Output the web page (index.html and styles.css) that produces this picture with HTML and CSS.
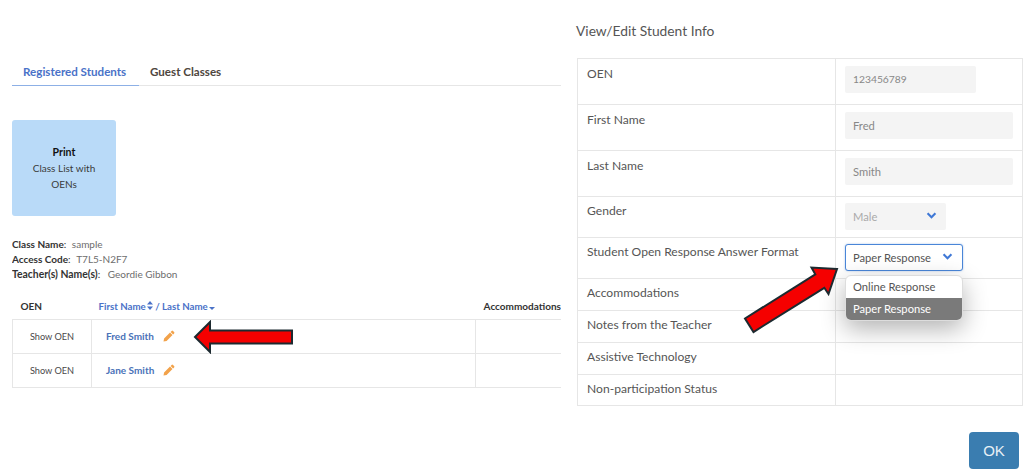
FILE: index.html
```html
<!DOCTYPE html>
<html lang="en">
<head>
<meta charset="utf-8">
<title>View/Edit Student Info</title>
<link rel="stylesheet" href="styles.css">
</head>
<body>
<div class="page">
  <section class="left">
    <nav class="tabs">
      <a class="tab active">Registered Students</a>
      <a class="tab">Guest Classes</a>
    </nav>
    <div class="print-tile"><b>Print</b><span>Class List with</span><span>OENs</span></div>
    <dl class="class-info">
      <div><dt>Class Name</dt>: <dd>sample</dd></div>
      <div><dt>Access Code</dt>: <dd>T7L5-N2F7</dd></div>
      <div><dt>Teacher(s) Name(s)</dt>: <dd>Geordie Gibbon</dd></div>
    </dl>
    <table class="students">
      <thead>
        <tr>
          <th class="c-oen">OEN</th>
          <th class="c-name"><span class="sort">First Name<svg class="updown" viewBox="0 0 6 9" width="6" height="9"><path d="M3 0 6 3.6H0zM3 9 0 5.4H6z"/></svg> / Last Name<svg class="caret" viewBox="0 0 8 4" width="6" height="3"><path d="M0 0H8L4 4z"/></svg></span></th>
          <th class="c-acc">Accommodations</th>
        </tr>
      </thead>
      <tbody>
        <tr>
          <td class="c-oen">Show OEN</td>
          <td class="c-name"><a class="student">Fred Smith</a><svg class="pencil" viewBox="0 0 12 12" width="12" height="12"><path d="M8.6.9a1 1 0 0 1 1.4 0l1.1 1.1a1 1 0 0 1 0 1.4l-1 1L7.6 1.9zM7 2.5 9.500 5 3.600 10.900.5 11.500 1.100 8.400z"/></svg></td>
          <td></td>
        </tr>
        <tr>
          <td class="c-oen">Show OEN</td>
          <td class="c-name"><a class="student">Jane Smith</a><svg class="pencil" viewBox="0 0 12 12" width="12" height="12"><path d="M8.6.9a1 1 0 0 1 1.4 0l1.1 1.1a1 1 0 0 1 0 1.4l-1 1L7.6 1.900zM7 2.500 9.500 5 3.600 10.900.5 11.500 1.100 8.400z"/></svg></td>
          <td></td>
        </tr>
      </tbody>
    </table>
  </section>
  <section class="right">
    <h2 class="title">View/Edit Student Info</h2>
    <table class="info">
      <tr class="r-tall"><th>OEN</th><td><div class="field short">123456789</div></td></tr>
      <tr class="r-tall"><th>First Name</th><td><div class="field">Fred</div></td></tr>
      <tr class="r-tall"><th>Last Name</th><td><div class="field">Smith</div></td></tr>
      <tr class="r-sel"><th>Gender</th><td><div class="field select disabled">Male<svg class="chev" viewBox="0 0 12 8" width="11" height="7"><path d="M1.500 1.500 6 6l4.500-4.500"/></svg></div></td></tr>
      <tr class="r-sel"><th>Student Open Response Answer Format</th><td><div class="field select focus">Paper Response<svg class="chev" viewBox="0 0 12 8" width="11" height="7"><path d="M1.500 1.500 6 6l4.500-4.500"/></svg></div>
        <ul class="menu"><li>Online Response</li><li class="sel">Paper Response</li></ul></td></tr>
      <tr class="r-low"><th>Accommodations</th><td></td></tr>
      <tr class="r-low"><th>Notes from the Teacher</th><td></td></tr>
      <tr class="r-low"><th>Assistive Technology</th><td></td></tr>
      <tr class="r-low r-last"><th>Non-participation Status</th><td></td></tr>
    </table>
    <div class="actions"><button class="ok">OK</button></div>
  </section>
</div>
<svg class="arrow arrow-left" viewBox="0 0 102 34" width="102" height="34"><path d="M2 17 17 2V10.500H99V23.500H17V32z"/></svg>
<svg class="arrow arrow-right" viewBox="0 0 100 72" width="100" height="72"><path d="M95 4 69.500 2.500 73.300 9.300 3 53.500 11.500 67 82.300 22.800 86.500 29z"/></svg>
</body>
</html>
```
FILE: styles.css
```css
* { box-sizing: border-box; }
html, body { margin: 0; padding: 0; background: #fff; }
body {
  width: 1024px; height: 476px; overflow: hidden; position: relative;
  font-family: Lato, "Noto Sans", sans-serif; color: #4a4a4a;
}
.page { display: flex; align-items: flex-start; }

.left { width: 549px; margin-left: 12px; padding-top: 59px; overflow: hidden; }
.tabs { display: flex; height: 27px; border-bottom: 1px solid #e6e6e6; font-size: 11.600px; font-weight: 700; line-height: 26px; }
.tab { padding: 0 11px; color: #4e4640; height: 27px; white-space: nowrap; }
.tab.active { color: #4a72c8; border-bottom: 1px solid #8db0e6; width: 127px; }
.print-tile {
  margin-top: 34px; width: 104px; height: 96px; background: #b9daf8; border-radius: 3px;
  display: flex; flex-direction: column; align-items: center; justify-content: center;
  font-size: 10px; line-height: 16px; color: #3a3a3a;
}
.print-tile b { color: #111; font-size: 10.500px; }
.class-info { margin: 21px 0 0; font-size: 10px; line-height: 15px; color: #333; }
.class-info dt { display: inline; font-weight: 700; }
.class-info div:last-child dt { font-size: 10.400px; }
.class-info dd { display: inline; margin: 0 0 0 3px; color: #6d6d6d; }
.class-info div:last-child dd { margin-left: 5px; }
.students { margin-top: 11px; width: 549px; border-collapse: collapse; table-layout: fixed; font-size: 10px; }
.students th { height: 26px; font-weight: 700; color: #333; border-bottom: 1px solid #e6e6e6; padding: 0; }
.students td { height: 34px; border: 1px solid #e6e6e6; padding: 0; color: #4a4a4a; }
.students td:last-child { border-right: 0; }
.c-oen { width: 79px; }
.students th.c-oen { text-align: left; padding-left: 8px; }
.students td.c-oen { text-align: center; font-size: 9.200px; }
.students .c-acc { width: 86px; text-align: right; white-space: nowrap; }
.students th.c-name { text-align: left; padding-left: 7px; }
.students td.c-name { padding-left: 14px; }
.sort { color: #4a72c8; font-size: 9.700px; }
.sort svg { fill: #4a72c8; margin-left: 1px; }
.student { color: #4a72b8; font-weight: 700; margin-right: 9px; }
.pencil { fill: #f2a24a; vertical-align: -2px; }

.right { width: 448px; margin-left: 15px; }
.title { margin: 0; padding-top: 21px; height: 58px; font-size: 13.800px; line-height: 20px; font-weight: 400; color: #555; }
.info { width: 446px; margin-left: 1px; border-collapse: collapse; table-layout: fixed; font-size: 12.100px; color: #555; }
.info th, .info td { border: 1px solid #e6e6e6; padding: 0; vertical-align: top; position: relative; }
.info th { width: 258px; font-weight: 400; text-align: left; padding-left: 9px; }
.r-tall th { height: 46px; padding-top: 7px; }
.r-tall td { padding: 7px 9px 0 9px; }
.r-sel th { height: 41px; padding-top: 6px; }
.r-sel td { padding: 6px 9px 0; }
.r-low th { height: 32px; padding-top: 6px; }
.r-last th { height: 31px; }
.field { height: 27px; line-height: 27px; padding: 0 8px; background: #f4f4f4; border-radius: 2px; color: #888; font-size: 11.200px; }
.field.short { width: 131px; font-size: 10.300px; }
.field.select { position: relative; width: 101px; padding-left: 8px; }
.field.disabled { color: #aaa; }
.field.focus { width: 118px; background: #fff; border: 1px solid #4a86d8; border-radius: 3px; color: #555; line-height: 25px; box-shadow: 0 0 2px rgba(74,134,216,.5); padding-left: 7px; }
.chev { position: absolute; right: 9px; top: 9px; fill: none; stroke: #3f78d6; stroke-width: 2.400; }
.field.focus .chev { top: 8px; }
.menu {
  position: absolute; z-index: 2; left: 9px; top: 37px; width: 118px; margin: 0; padding: 0; list-style: none;
  background: #fff; border: 1px solid #ddd; border-radius: 6px; overflow: hidden;
  font-size: 11.200px; line-height: 22px; box-shadow: 0 8px 24px rgba(0,0,0,.3); color: #555;
}
.menu li { height: 22px; padding-left: 7px; }
.menu .sel { background: #7a7a7a; color: #fff; }
.actions { display: flex; justify-content: flex-end; padding: 26px 5px 0 0; }
.ok { width: 50px; height: 37px; background: #3a7db0; border: 0; border-radius: 4px; color: #e8f0f6; font: 400 15px "Liberation Sans", sans-serif; }

.arrow { position: absolute; z-index: 3; }
.arrow path { fill: #f50000; stroke: #1c2a30; stroke-width: 2; }
.arrow-left { left: 193px; top: 320px; }
.arrow-right { left: 742px; top: 265px; }
```
